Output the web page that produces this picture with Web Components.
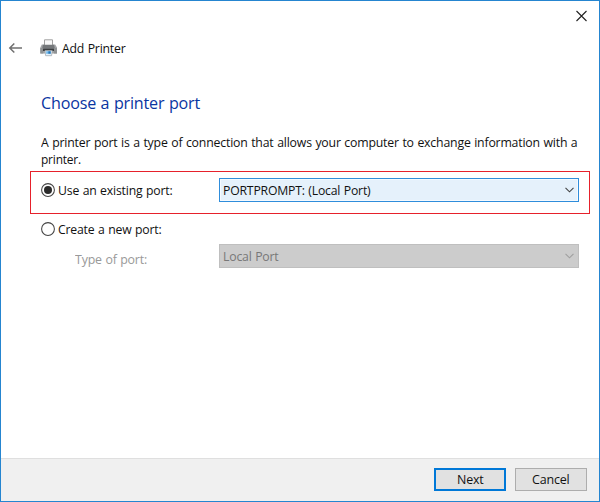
<!DOCTYPE html>
<html lang="en">
<head>
<meta charset="utf-8">
<title>Add Printer</title>
<style>
html, body { margin: 0; height: 100%; }
body { font: 13px/17px "Open Sans", "Noto Sans", sans-serif; color: #111; background: #fff; overflow: hidden; }
</style>
</head>
<body>
<printer-wizard></printer-wizard>
<script>
const define = (name, html, setup) => customElements.define(name, class extends HTMLElement {
  connectedCallback() {
    if (this.shadowRoot) return;
    this.attachShadow({ mode: 'open' }).innerHTML = html;
    if (setup) setup(this);
  }
});

// A single line of text condensed to a given width.
define('text-line', `<style>
  :host { display: inline-block; white-space: nowrap; }
  span { display: inline-block; transform-origin: 0 50%; word-spacing: .6px; letter-spacing: -.2px; }
</style><span><slot></slot></span>`, el => {
  const span = el.shadowRoot.querySelector('span');
  const width = Number(el.getAttribute('width'));
  const natural = span.getBoundingClientRect().width;
  el.style.width = width + 'px';
  span.style.transform = `scaleX(${(width / natural).toFixed(4)})`;
});

define('printer-icon', `<style>:host{display:block;width:18px;height:18px} svg{display:block}</style>
<svg width="18" height="18" viewBox="0 0 18 18">
  <path d="M4.500.800h8v6h-8z" fill="#f8f8f8" stroke="#a0a0a0"/>
  <path d="M1.800 5.500h2v2h9.400v-2h2L17 8.500V14.500H.3V8.500z" fill="#a4a6a8"/>
  <path d="M3 5.800h11l1 4.200H2z" fill="#74777a"/>
  <path d="M.3 9h3v5.500h-3zM13.800 9H17v5.500h-3.200z" fill="#8f9294"/>
  <path d="M3 9.800h11v2.200H3z" fill="#3c3f41"/>
  <path d="M5 11.500h7.200l-.6 5.200H5.600z" fill="#e4f1fa" stroke="#9ca4a9" stroke-width=".7"/>
  <path d="M6.200 12.200h2v2.600h-2z" fill="#71b9ea"/><path d="M8.200 12.200h2.600v2.600H8.200z" fill="#2378bd"/>
</svg>`);

define('title-bar', `<style>
  :host { display: grid; grid-template-rows: 31px 34px; height: 65px; }
  .top { display: flex; justify-content: flex-end; padding: 9px 12px 0 0; }
  .nav { display: flex; align-items: center; padding: 0 0 0 7px; height: 32px; }
  printer-icon { margin-left: 17px; margin-right: 4px; }
  svg { display: block; }
</style>
<div class="top"><svg width="11" height="12" viewBox="0 0 11 12"><path d="M.5 1l10 10M10.500 1l-10 10" stroke="#222" stroke-width="1.100"/></svg></div>
<div class="nav">
  <svg width="15" height="12" viewBox="0 0 15 12"><path d="M14 6H2M6.300 1.500L1.800 6l4.500 4.500" fill="none" stroke="#707070" stroke-width="1.500"/></svg>
  <printer-icon></printer-icon><text-line width="63.500">Add Printer</text-line>
</div>`);

define('radio-option', `<style>
  :host { display: flex; align-items: center; width: 178px; }
  svg { display: block; margin-right: 3px; }
</style>
<svg width="14" height="14" viewBox="0 0 14 14"><circle cx="7" cy="7" r="6.400" fill="#fff" stroke="#444" stroke-width="1.050"/><circle class="dot" cx="7" cy="7" r="4" fill="#2b2b2b"/></svg><slot></slot>`,
el => { if (!el.hasAttribute('checked')) el.shadowRoot.querySelector('.dot').remove(); });

define('port-select', `<style>
  :host { display: flex; align-items: center; justify-content: space-between; box-sizing: border-box;
    width: 360px; height: 24px; padding: 0 4px 0 3px; border: 1px solid #2f8ddb; background: #e5f1fb; box-shadow: inset 0 0 0 1px #f5faff; color: #111; }
  :host([disabled]) { border-color: #bfbfbf; background: #ccc; color: #787878; box-shadow: none; }
  path { stroke: #444; } :host([disabled]) path { stroke: #a0a0a0; }
</style><slot></slot><svg width="9" height="6" viewBox="0 0 9 6"><path d="M.5.800l4 4 4-4" fill="none" stroke-width="1.100"/></svg>`);

define('push-button', `<style>
  :host { display: flex; align-items: center; justify-content: center; box-sizing: border-box; width: 72px; height: 23px; border: 1px solid #adadad; background: #e1e1e1; }
  :host([primary]) { border: 2px solid #0078d7; }
</style><slot></slot>`);

define('port-page', `<style>
  :host { display: block; }
  h1 { margin: 0; padding: 26px 0 0 41px; font-size: 17px; line-height: 22px; font-weight: 400; color: #0a35a2; }
  p { margin: 20px 0 0 41px; height: 34px; }
  p text-line { display: block; }
  .row { display: flex; align-items: center; }
  .existing { box-sizing: border-box; width: 560px; height: 43px; margin: 3px 0 0 30px; padding: 0 0 5px 10px; border: 1px solid #e6212b; }
  .new { margin: 6px 0 0 41px; height: 18px; }
  .type { margin: 6px 0 0 75px; color: #999; }
  .label { width: 144px; padding-top: 6px; }
</style>
<h1><text-line width="159">Choose a printer port</text-line></h1>
<p><text-line width="536.500">A printer port is a type of connection that allows your computer to exchange information with a</text-line>
<text-line width="40">printer.</text-line></p>
<div class="row existing"><radio-option checked><text-line width="114.500">Use an existing port:</text-line></radio-option><port-select><text-line width="147.500">PORTPROMPT: (Local Port)</text-line></port-select></div>
<div class="row new"><radio-option><text-line width="103.500">Create a new port:</text-line></radio-option></div>
<div class="row type"><div class="label"><text-line width="72">Type of port:</text-line></div><port-select disabled><text-line width="55.500">Local Port</text-line></port-select></div>`);

define('printer-wizard', `<style>
  :host { display: flex; flex-direction: column; box-sizing: border-box; width: 600px; height: 502px; border: 1px solid #2585d0; background: #fff; }
  title-bar { flex: none; }
  port-page { flex: 1; margin-left: -1px; }
  footer { flex: none; display: flex; align-items: flex-start; justify-content: flex-end; gap: 9px; box-sizing: border-box; height: 43px; padding: 9px 12px 0 0; border-top: 1px solid #dfdfdf; background: #f0f0f0; }
</style>
<title-bar></title-bar><port-page></port-page>
<footer><push-button primary><text-line width="26.500">Next</text-line></push-button><push-button><text-line width="37.500">Cancel</text-line></push-button></footer>`);
</script>
</body>
</html>
